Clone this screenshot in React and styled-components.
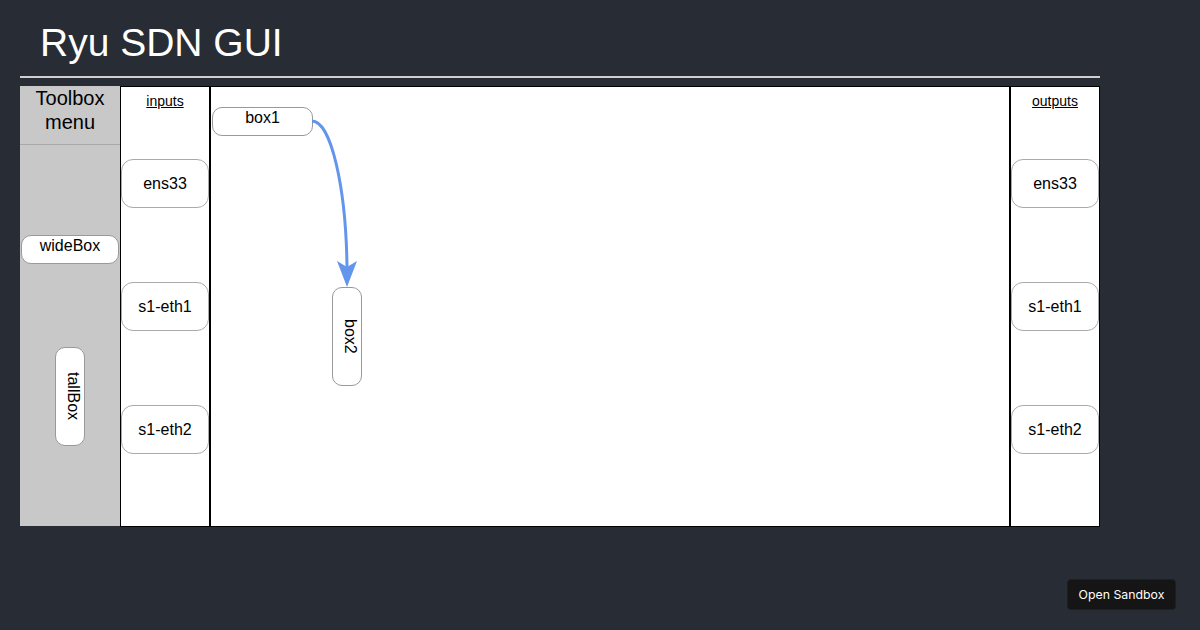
import React from "react";
import styled, { createGlobalStyle } from "styled-components";

const GlobalStyle = createGlobalStyle`
  body {
    margin: 0;
    background: #282c34;
    font-family: "Liberation Sans", Arial, sans-serif;
  }
`;

const Page = styled.div`
  width: 1080px;
  padding: 0 20px;
`;

const Title = styled.h1`
  margin: 0 0 11px;
  padding: 20px 0 0 20px;
  font-size: 39px;
  font-weight: 400;
  line-height: 45px;
  color: #fff;
`;

const Rule = styled.div`
  border-top: 2px solid #cfcfcf;
  margin-bottom: 8px;
`;

const Workspace = styled.div`
  display: flex;
  align-items: flex-start;
`;

const Toolbox = styled.div`
  width: 100px;
  height: 440px;
  background: #c8c8c8;
  display: flex;
  flex-direction: column;
`;

const ToolboxHeader = styled.div`
  height: 58px;
  border-bottom: 1px solid #a9a9a9;
  font-size: 20px;
  line-height: 24px;
  text-align: center;
  color: #000;
`;

const ToolboxBody = styled.div`
  display: flex;
  flex-direction: column;
  align-items: center;
`;

const Node = styled.div`
  box-sizing: border-box;
  width: ${(p) => (p.$vertical ? "30px" : "98px")};
  height: ${(p) => (p.$vertical ? "99px" : "29px")};
  margin-top: ${(p) => p.$top || 0}px;
  background: #fff;
  border: 1px solid #999;
  border-radius: 10px;
  font-size: 16px;
  line-height: 18px;
  text-align: center;
  color: #000;
  ${(p) =>
    p.$vertical
      ? "writing-mode: vertical-rl; padding-right: 2px;"
      : "padding-top: 1px;"}
`;

const CanvasNode = styled(Node)`
  position: absolute;
  margin: 0;
  width: ${(p) => (p.$vertical ? "30px" : "101px")};
  left: ${(p) => p.$x}px;
  top: ${(p) => p.$y}px;
`;

const PortColumn = styled.div`
  box-sizing: border-box;
  width: 90px;
  height: 441px;
  background: #fff;
  border: 1px solid #000;
  display: flex;
  flex-direction: column;
  align-items: center;
`;

const ColumnLabel = styled.div`
  margin-top: 6px;
  font-size: 14px;
  line-height: 16px;
  text-decoration: underline;
  color: #000;
`;

const Port = styled.div`
  box-sizing: border-box;
  width: 88px;
  height: 49px;
  margin-top: ${(p) => (p.$first ? 50 : 74)}px;
  border: 1px solid #aaa;
  border-radius: 12px;
  display: flex;
  align-items: center;
  justify-content: center;
  font-size: 16px;
  color: #000;
`;

const Canvas = styled.div`
  box-sizing: border-box;
  position: relative;
  width: 800px;
  height: 441px;
  background: #fff;
  border: 1px solid #000;
`;

const Links = styled.svg`
  position: absolute;
  left: 0;
  top: 0;
  width: 100%;
  height: 100%;
  pointer-events: none;
`;

const SandboxButton = styled.button`
  position: fixed;
  right: 24px;
  bottom: 20px;
  width: 109px;
  height: 31px;
  padding: 0;
  background: #151515;
  border: 1px solid #1f1f1f;
  border-radius: 4px;
  color: #fff;
  font-family: Inter, "Liberation Sans", sans-serif;
  font-size: 12.3px;
  cursor: pointer;
`;

const ports = ["ens33", "s1-eth1", "s1-eth2"];

const PortList = ({ label }) => (
  <PortColumn>
    <ColumnLabel>{label}</ColumnLabel>
    {ports.map((name, i) => (
      <Port key={name} $first={i === 0}>
        {name}
      </Port>
    ))}
  </PortColumn>
);

export default function App() {
  return (
    <>
      <GlobalStyle />
      <Page>
        <Title>Ryu SDN GUI</Title>
        <Rule />
        <Workspace>
          <Toolbox>
            <ToolboxHeader>
              Toolbox
              <br />
              menu
            </ToolboxHeader>
            <ToolboxBody>
              <Node $top={90}>wideBox</Node>
              <Node $vertical $top={83}>
                tallBox
              </Node>
            </ToolboxBody>
          </Toolbox>
          <PortList label="inputs" />
          <Canvas>
            <CanvasNode $x={1} $y={20}>
              box1
            </CanvasNode>
            <CanvasNode $vertical $x={121} $y={200}>
              box2
            </CanvasNode>
            <Links>
              <path
                d="M101 34 C120 34, 135 100, 136 180"
                fill="none"
                stroke="#6495ed"
                strokeWidth="3"
              />
              <polygon points="136,200 126,174 136,180 146,174" fill="#6495ed" />
            </Links>
          </Canvas>
          <PortList label="outputs" />
        </Workspace>
      </Page>
      <SandboxButton>Open Sandbox</SandboxButton>
    </>
  );
}
